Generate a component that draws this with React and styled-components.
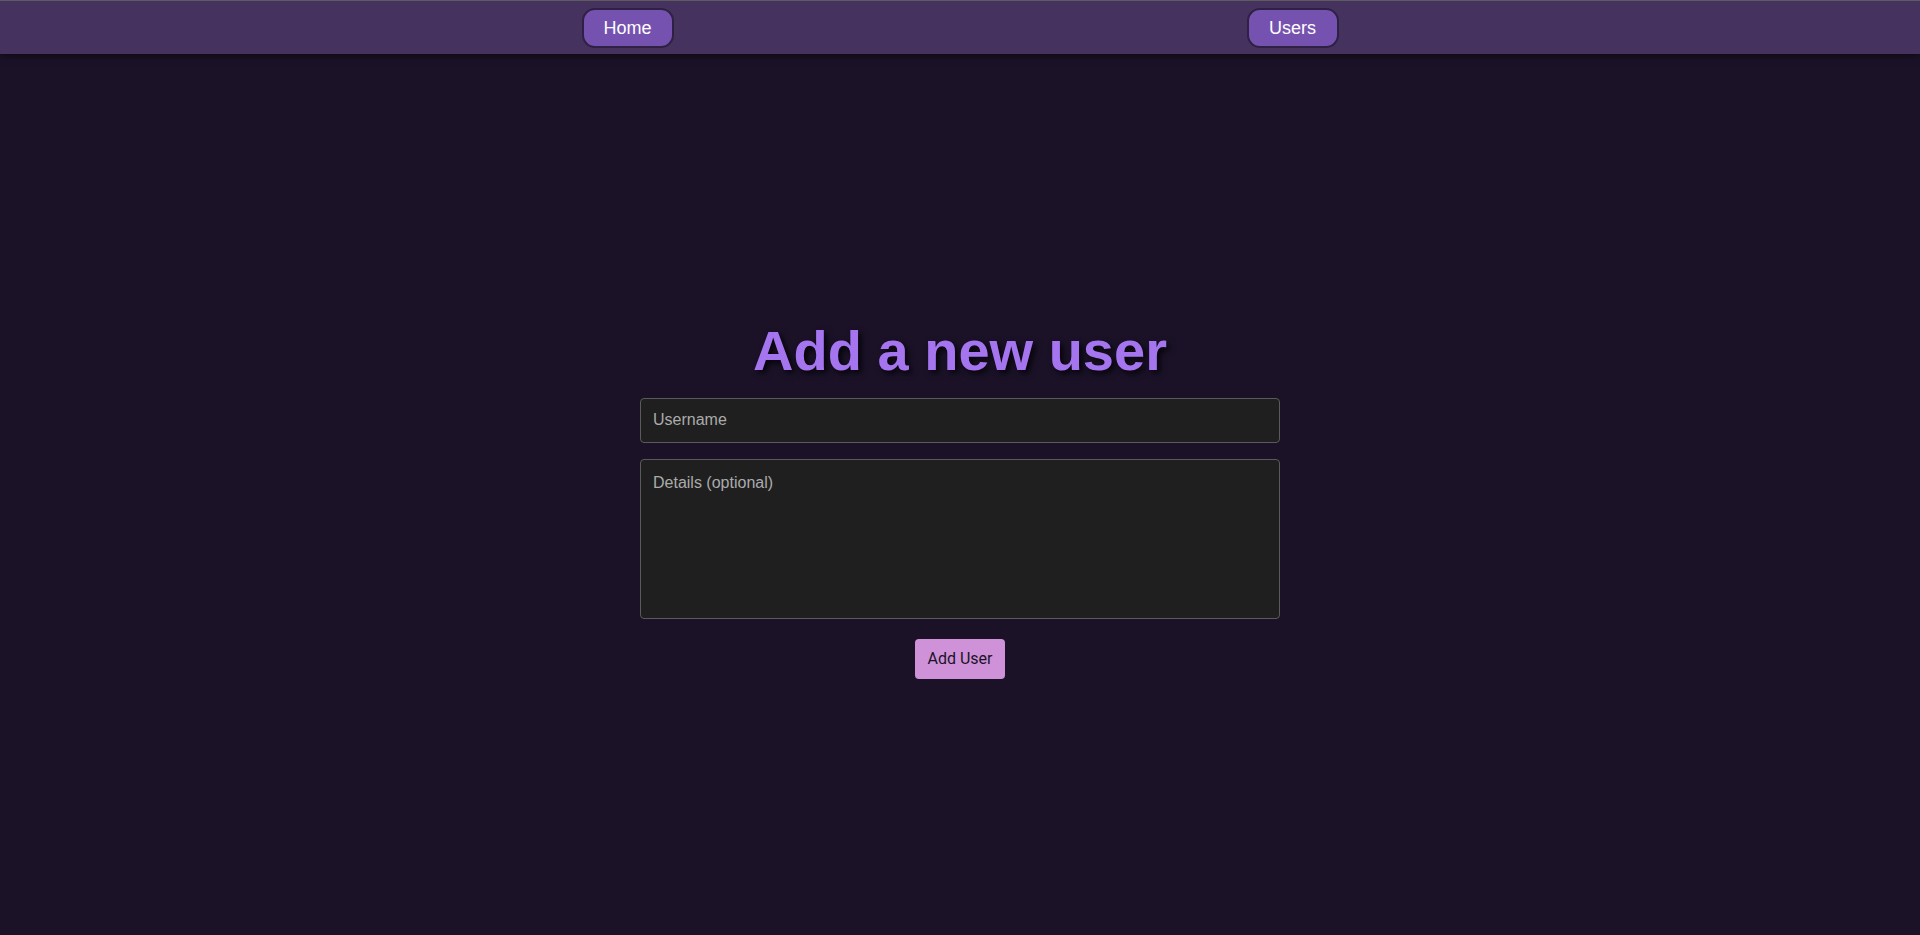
import React from 'react'
import styled, { createGlobalStyle } from 'styled-components'

const GlobalStyle = createGlobalStyle`
  html, body {
    margin: 0;
    padding: 0;
    background: #1b1228;
    font-family: "Liberation Sans", Arial, sans-serif;
  }
  * { box-sizing: border-box; }
`

const StyledNav = styled.nav`
  height: 54px;
  background: #45325e;
  border-top: 1px solid #5c5c5c;
  box-shadow: 0 2px 8px rgba(0, 0, 0, 0.55);
  display: flex;
  justify-content: center;
  align-items: center;
  position: relative;
  z-index: 1;
`

const StyledNavList = styled.div`
  width: 1330px;
  display: flex;
  justify-content: space-around;
  align-items: center;
`

const StyledNavButton = styled.a`
  display: inline-block;
  width: 92px;
  height: 40px;
  line-height: 36px;
  text-align: center;
  background: #7652b0;
  color: #ffffff;
  border: 2px solid #2e2144;
  border-radius: 13px;
  font-size: 18px;
  text-decoration: none;
  cursor: pointer;
`

const StyledMain = styled.main`
  min-height: calc(100vh - 54px);
  display: flex;
  flex-direction: column;
  align-items: center;
  justify-content: center;
  padding-top: 7px;
`

const StyledTitle = styled.h1`
  margin: 0 0 15px;
  font-size: 56px;
  font-weight: 700;
  color: #a575f0;
  text-shadow: 3px 3px 6px rgba(0, 0, 0, 0.85);
`

const StyledForm = styled.form`
  width: 640px;
  display: flex;
  flex-direction: column;
  align-items: center;
  gap: 16px;
`

const fieldStyles = `
  width: 100%;
  background: #1f1f1f;
  color: #dddddd;
  border: 1px solid #5a5a5a;
  border-radius: 4px;
  padding: 12px;
  font-family: "Liberation Sans", Arial, sans-serif;
  font-size: 16px;
  outline: none;
  &::placeholder { color: #ababab; }
`

const StyledInput = styled.input`
  ${fieldStyles}
  height: 45px;
`

const StyledTextarea = styled.textarea`
  ${fieldStyles}
  height: 160px;
  padding-top: 14px;
  resize: none;
`

const StyledSubmit = styled.button`
  margin-top: 4px;
  width: 90px;
  height: 40px;
  background: #cf92d8;
  color: #1b1228;
  border: none;
  border-radius: 4px;
  font-family: Roboto, "Liberation Sans", sans-serif;
  font-size: 16px;
  cursor: pointer;
`

const NavBar = () => (<StyledNav>
  <StyledNavList>
    <StyledNavButton>Home</StyledNavButton>
    <StyledNavButton>Users</StyledNavButton>
  </StyledNavList>
</StyledNav>)

const App = () => {
  return (<>
    <GlobalStyle />
    <NavBar />
    <StyledMain>
      <StyledTitle>Add a new user</StyledTitle>
      <StyledForm onSubmit={(e) => e.preventDefault()}>
        <StyledInput placeholder='Username' />
        <StyledTextarea placeholder='Details (optional)' />
        <StyledSubmit type='submit'>Add User</StyledSubmit>
      </StyledForm>
    </StyledMain>
  </>)
}

export default App
